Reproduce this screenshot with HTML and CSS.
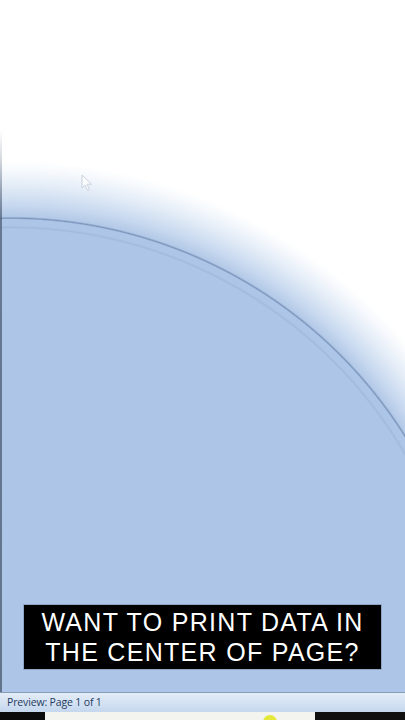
FILE: index.html
```html
<!DOCTYPE html>
<html>
<head>
<meta charset="utf-8">
<link rel="stylesheet" href="styles.css">
</head>
<body>
<div class="screen">
  <div class="canvas">
    <svg class="cursor" width="12" height="18" viewBox="0 0 12 18">
      <path d="M1 1 L1 14 L4 11 L6.5 16.5 L8.5 15.6 L6 10.2 L10.5 10.2 Z" fill="#fbfcfe" stroke="#c9d2de" stroke-width="1"/>
    </svg>
    <div class="caption">
      <div class="caption-line">WANT TO PRINT DATA IN</div>
      <div class="caption-line">THE CENTER OF PAGE?</div>
    </div>
  </div>
  <div class="status">Preview: Page 1 of 1</div>
  <div class="strip">
    <div class="strip-dark"></div>
    <div class="strip-light"><span class="dot"></span></div>
    <div class="strip-dark grow"></div>
  </div>
</div>
</body>
</html>
```
FILE: styles.css
```css
html, body {
  margin: 0;
  padding: 0;
  background: #fff;
}
.screen {
  width: 405px;
  height: 720px;
  display: flex;
  flex-direction: column;
  overflow: hidden;
}
.canvas {
  position: relative;
  flex: 1;
  display: flex;
  flex-direction: column;
  justify-content: flex-end;
  align-items: center;
  padding-bottom: 22px;
  background:
    linear-gradient(to bottom, rgba(80,95,118,0) 0, rgba(80,95,118,0) 130px, rgba(80,95,118,0.75) 220px, rgba(80,95,118,0.8) 100%) left top / 2px 100% no-repeat,
    radial-gradient(circle 560px at 10px 685px,
      #adc5e6 0,
      #adc5e6 456px,
      #a2bbdd 457.5px,
      #adc5e6 459.5px,
      #adc5e6 465.5px,
      #7b95bc 466.8px,
      #b3c9e7 468.5px,
      #c7d8ef 480px,
      #e0eaf6 497px,
      #f3f7fc 512px,
      #ffffff 524px);
}
.cursor {
  position: absolute;
  left: 81px;
  top: 174px;
}
.caption {
  box-sizing: border-box;
  width: 359px;
  height: 66px;
  background: #000;
  border: 1px solid #8fa5c4;
  padding-top: 2px;
  color: #fff;
  font-family: "Liberation Sans", Arial, sans-serif;
  font-size: 25px;
  letter-spacing: 1.3px;
  line-height: 30px;
  text-align: center;
}
.caption-line {
  white-space: nowrap;
}
.status {
  height: 20px;
  box-sizing: border-box;
  border-top: 1px solid #8a9db6;
  background: linear-gradient(to bottom, #e4edf8 0, #d6e3f3 45%, #c5d7ee 100%);
  font-family: "Open Sans", "Liberation Sans", sans-serif;
  font-size: 10.5px;
  letter-spacing: -0.15px;
  line-height: 19px;
  color: #1f3a60;
  padding-left: 7px;
}
.strip {
  height: 8px;
  display: flex;
}
.strip-dark {
  width: 45px;
  background: #0b0b0b;
}
.strip-dark.grow {
  width: auto;
  flex: 1;
  background: #101010;
}
.strip-light {
  width: 270px;
  background: #f3f3f0;
  position: relative;
  overflow: hidden;
}
.dot {
  position: absolute;
  left: 218px;
  top: 3px;
  width: 14px;
  height: 14px;
  border-radius: 50%;
  background: #e4e83a;
}
```
